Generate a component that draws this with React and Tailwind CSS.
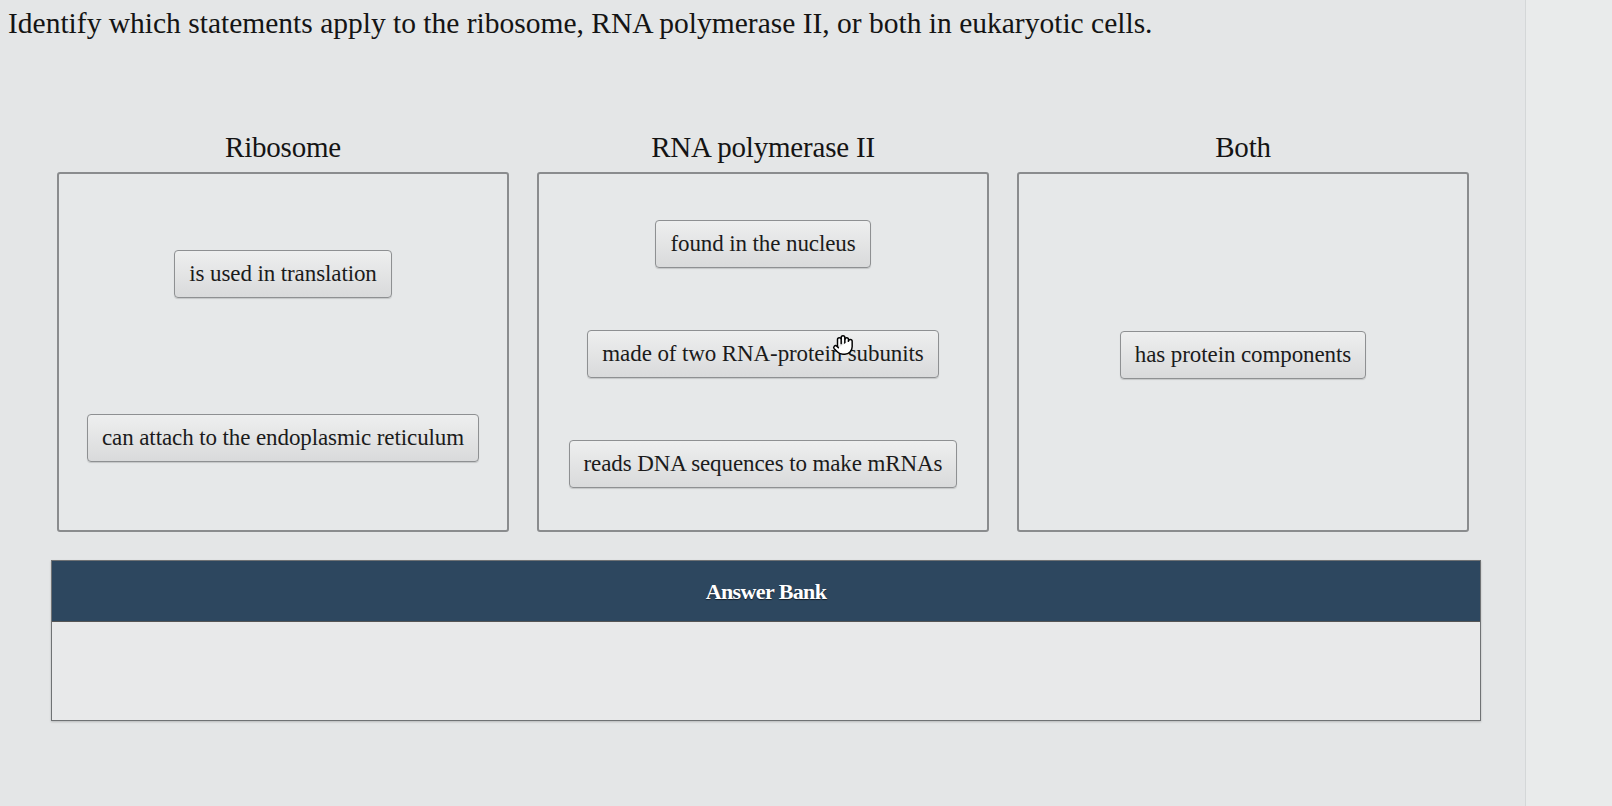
import React from "react";
import { Hand } from "lucide-react";

const serif = { fontFamily: '"Liberation Serif", "Times New Roman", serif' };

const Card = ({ children, className = "" }) => (
  <div
    className={`relative self-center whitespace-nowrap rounded-[4px] border border-[#8e9092] bg-gradient-to-b from-[#eeefef] to-[#d9dadb] px-[14px] py-[10px] text-[23px] leading-[26px] tracking-[-0.1px] text-[#1b1b1b] shadow-[0_1px_1px_rgba(0,0,0,0.15)] ${className}`}
  >
    {children}
  </div>
);

const Column = ({ title, children, className = "" }) => (
  <div className="flex flex-col">
    <h2 className="flex h-[44px] items-center justify-center pb-[4px] text-[29px] tracking-[-0.2px] text-[#141414]">
      {title}
    </h2>
    <div
      className={`flex h-[360px] flex-col rounded-[3px] border-2 border-[#8a8c8e] bg-[#e6e8e9] ${className}`}
    >
      {children}
    </div>
  </div>
);

export default function App() {
  return (
    <div className="flex min-h-screen bg-[#e4e6e7]" style={serif}>
      <div className="w-[1526px] shrink-0 border-r border-[#d4d7d8]">
        <p className="pl-[8px] pt-[6px] text-[29.5px] leading-[34px] text-[#141414]">
          Identify which statements apply to the ribosome, RNA polymerase II, or both in eukaryotic cells.
        </p>

        <div className="mt-[88px] grid grid-cols-[452px_452px_452px] gap-x-[28px] pl-[57px]">
          <Column title="Ribosome" className="gap-[116px] pt-[76px]">
            <Card>is used in translation</Card>
            <Card>can attach to the endoplasmic reticulum</Card>
          </Column>

          <Column title="RNA polymerase II" className="gap-[62px] pt-[46px]">
            <Card>found in the nucleus</Card>
            <Card>
              made of two RNA-protein subunits
              <Hand
                size={22}
                strokeWidth={1.6}
                className="absolute left-[244px] top-[3px] fill-white text-black"
              />
            </Card>
            <Card>reads DNA sequences to make mRNAs</Card>
          </Column>

          <Column title="Both" className="pt-[157px]">
            <Card>has protein components</Card>
          </Column>
        </div>

        <div className="ml-[51px] mt-[28px] w-[1430px] border border-[#6f7274] shadow-[0_1px_2px_rgba(0,0,0,0.2)]">
          <div className="flex h-[60px] items-center justify-center bg-[#2d475f] text-[22px] font-bold tracking-[-0.6px] text-white [text-shadow:0_1px_1px_rgba(0,0,0,0.6)]">
            Answer Bank
          </div>
          <div className="h-[99px] border-t border-[#555] bg-[#e8e9ea]" />
        </div>
      </div>
      <div className="flex-1 bg-[#e9ebeb]" />
    </div>
  );
}
